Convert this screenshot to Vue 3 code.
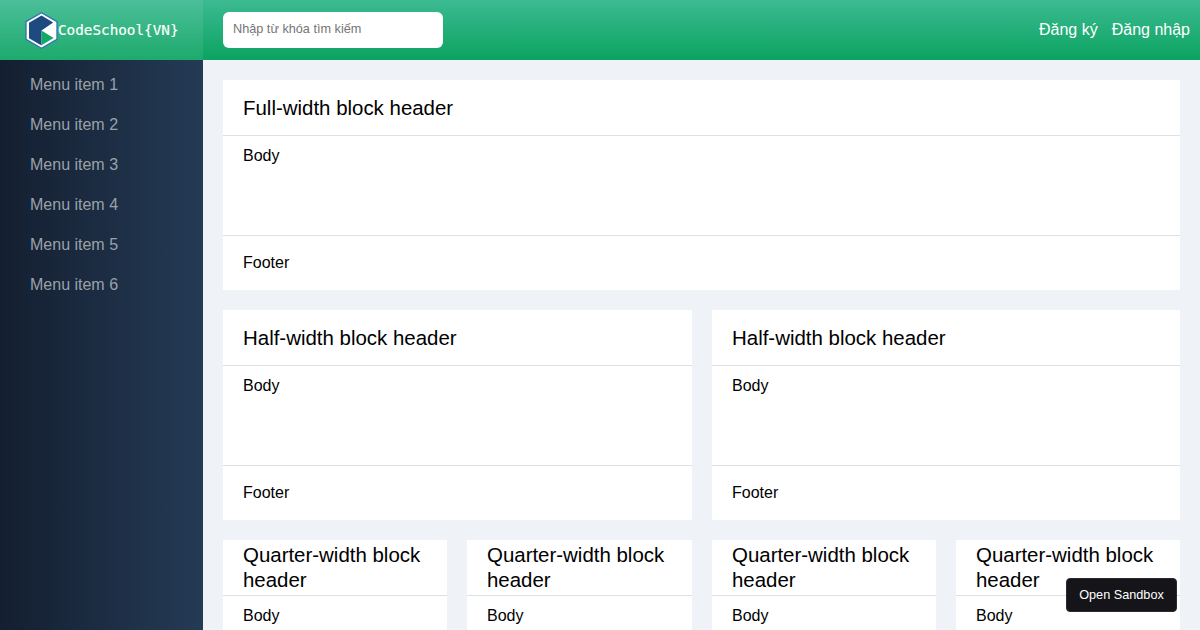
<script setup>
const menu = [1, 2, 3, 4, 5, 6].map((n) => `Menu item ${n}`)
</script>

<template>
  <div class="app">
    <header class="topbar">
      <div class="brand">
        <svg class="logo" width="33" height="37" viewBox="0 0 33 37">
          <path d="M16.5 .8 L32 9.6 V27.4 L16.5 36.2 L1 27.4 V9.6 Z" fill="#ffffff" stroke="#2f74ad" stroke-width="1.3" />
          <path d="M16.5 3.6 L28.2 10.6 L16.5 18.6 V33.4 L4 26.2 V10.8 Z" fill="#1f4a80" />
          <path d="M16.5 18.6 L28.6 26 L16.5 33.2 Z" fill="#12a865" />
        </svg>
        <span class="brand-name">CodeSchool{VN}</span>
      </div>
      <div class="bar">
        <input class="search" placeholder="Nhập từ khóa tìm kiếm" />
        <nav class="auth">
          <span>Đăng ký</span>
          <span>Đăng nhập</span>
        </nav>
      </div>
    </header>
    <div class="layout">
      <aside class="sidebar">
        <div v-for="item in menu" :key="item" class="menu-item">{{ item }}</div>
      </aside>
      <main class="content">
        <section class="card">
          <div class="card-head">Full-width block header</div>
          <div class="card-body">Body</div>
          <div class="card-foot">Footer</div>
        </section>
        <div class="row">
          <section v-for="n in 2" :key="n" class="card">
            <div class="card-head">Half-width block header</div>
            <div class="card-body">Body</div>
            <div class="card-foot">Footer</div>
          </section>
        </div>
        <div class="row">
          <div v-for="g in 2" :key="g" class="row quarter">
            <section v-for="n in 2" :key="n" class="card">
              <div class="card-head">Quarter-width block header</div>
              <div class="card-body">Body</div>
              <div class="card-foot">Footer</div>
            </section>
          </div>
        </div>
      </main>
    </div>
    <button class="sandbox">Open Sandbox</button>
  </div>
</template>

<style>
html, body { margin: 0; overflow: hidden; }
</style>

<style scoped>
.app {
  position: relative;
  width: 1200px;
  height: 630px;
  overflow: hidden;
  background: #eff3f7;
  font-family: "Liberation Sans", Arial, sans-serif;
  font-size: 16px;
  color: #000;
}
.topbar {
  display: flex;
  height: 60px;
  background: linear-gradient(to bottom, #3cba92, #0ba360);
}
.brand {
  width: 203px;
  flex: none;
  box-sizing: border-box;
  padding-left: 25px;
  display: flex;
  align-items: center;
  background: rgba(255, 255, 255, 0.08);
}
.logo { flex: none; }
.brand-name {
  font-family: "DejaVu Sans Mono", monospace;
  font-size: 14.3px;
  color: #fff;
  -webkit-text-stroke: 0.15px #fff;
}
.bar {
  flex: 1;
  display: flex;
  align-items: center;
  justify-content: space-between;
  padding: 0 10px 0 20px;
}
.search {
  width: 220px;
  height: 36px;
  box-sizing: border-box;
  border: 0;
  border-radius: 6px;
  background: #fff;
  padding: 0 10px 2px;
  font-family: "Liberation Sans", Arial, sans-serif;
  font-size: 12.7px;
  outline: none;
}
.search::placeholder { color: #757575; }
.auth {
  display: flex;
  gap: 14px;
  color: #fff;
  font-size: 16px;
}
.layout {
  display: flex;
  height: 570px;
}
.sidebar {
  width: 203px;
  flex: none;
  box-sizing: border-box;
  padding-top: 5px;
  background: linear-gradient(to right, #141e30, #243b55);
}
.menu-item {
  height: 40px;
  line-height: 40px;
  padding-left: 30px;
  color: #9aa1a9;
}
.content {
  flex: 1;
  min-width: 0;
  padding: 20px;
  display: flex;
  flex-direction: column;
  gap: 20px;
}
.row {
  display: grid;
  grid-template-columns: 469fr 468fr;
  gap: 20px;
  min-width: 0;
}
.row.quarter { grid-template-columns: 1fr 1fr; }
.row.quarter:first-child { grid-template-columns: 224fr 225fr; }
.card {
  min-width: 0;
  background: #fff;
}
.card-head {
  height: 55px;
  padding: 0 20px 0.4px;
  box-sizing: border-box;
  display: flex;
  align-items: center;
  font-size: 20.45px;
  line-height: 25px;
}
.card-body {
  height: 100px;
  box-sizing: border-box;
  padding: 10px 20px 0;
  line-height: 20px;
  border-top: 1px solid #dcdfe3;
}
.card-foot {
  height: 55px;
  box-sizing: border-box;
  padding: 0 20px;
  border-top: 1px solid #dcdfe3;
  display: flex;
  align-items: center;
}
.sandbox {
  position: absolute;
  right: 23px;
  bottom: 18px;
  width: 111px;
  height: 34px;
  padding: 0;
  border: 1px solid #2a2a30;
  border-radius: 4px;
  background: #151519;
  color: #fff;
  font-family: "Liberation Sans", Arial, sans-serif;
  font-size: 12.7px;
}
</style>
